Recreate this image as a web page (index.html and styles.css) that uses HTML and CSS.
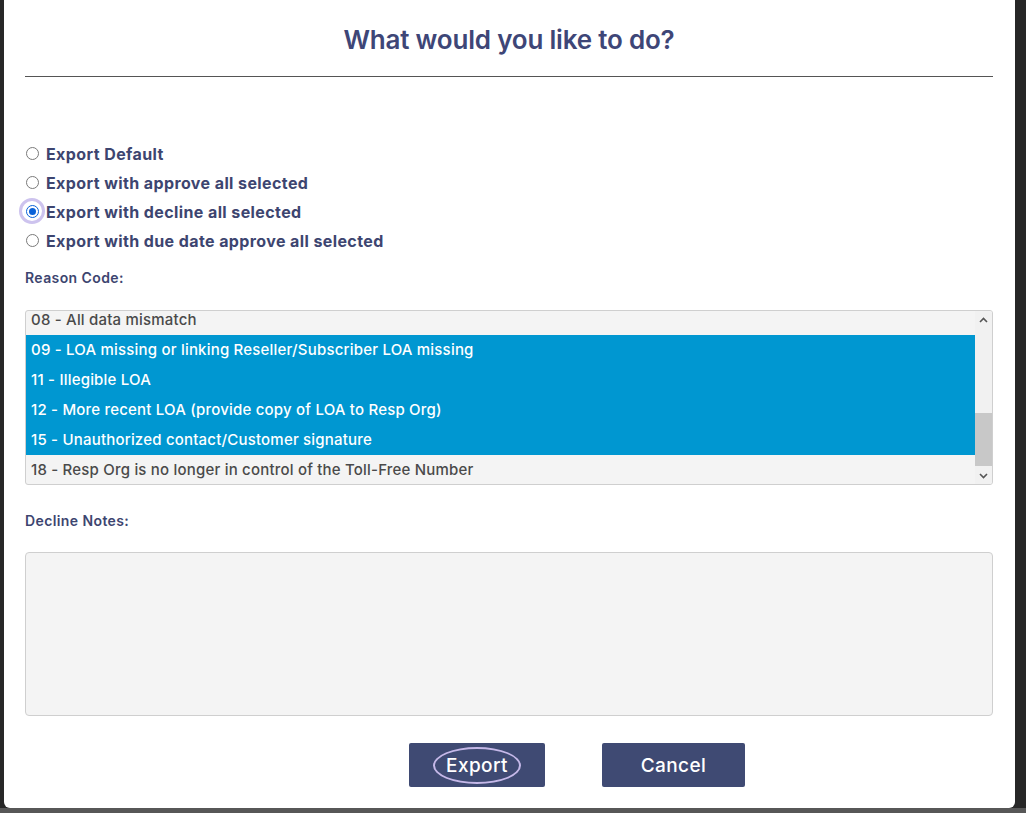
FILE: index.html
```html
<!DOCTYPE html>
<html lang="en">
<head>
<meta charset="utf-8">
<title>Export</title>
<link rel="stylesheet" href="styles.css">
</head>
<body>
<div class="modal">
  <h1 class="title">What would you like to do?</h1>
  <hr class="rule">
  <div class="options">
    <label class="radio-row"><span class="radio"></span><span class="radio-label">Export Default</span></label>
    <label class="radio-row"><span class="radio"></span><span class="radio-label">Export with approve all selected</span></label>
    <label class="radio-row"><span class="radio checked"><span class="dot"></span></span><span class="radio-label">Export with decline all selected</span></label>
    <label class="radio-row"><span class="radio"></span><span class="radio-label">Export with due date approve all selected</span></label>
  </div>
  <div class="field-label reason-label">Reason Code:</div>
  <div class="listbox">
    <div class="list">
      <div class="opt">08 - All data mismatch</div>
      <div class="opt sel">09 - LOA missing or linking Reseller/Subscriber LOA missing</div>
      <div class="opt sel">11 - Illegible LOA</div>
      <div class="opt sel">12 - More recent LOA (provide copy of LOA to Resp Org)</div>
      <div class="opt sel">15 - Unauthorized contact/Customer signature</div>
      <div class="opt">18 - Resp Org is no longer in control of the Toll-Free Number</div>
    </div>
    <div class="scrollbar">
      <div class="arrow">
        <svg width="9" height="6" viewBox="0 0 9 6"><path d="M1 5 L4.5 1.5 L8 5" fill="none" stroke="#555" stroke-width="1.6"/></svg>
      </div>
      <div class="track"><div class="thumb"></div></div>
      <div class="arrow">
        <svg width="9" height="6" viewBox="0 0 9 6"><path d="M1 1 L4.5 4.5 L8 1" fill="none" stroke="#555" stroke-width="1.6"/></svg>
      </div>
    </div>
  </div>
  <div class="field-label notes-label">Decline Notes:</div>
  <div class="notes"></div>
  <div class="actions">
    <button class="btn btn-export"><span class="focus-ring">Export</span></button>
    <button class="btn btn-cancel">Cancel</button>
  </div>
</div>
<div class="backdrop-bottom"></div>
</body>
</html>
```
FILE: styles.css
```css
* { box-sizing: border-box; }
html, body { margin: 0; padding: 0; }
body {
  background: #272727;
  font-family: Inter, "Noto Sans", sans-serif;
  width: 1026px;
  height: 813px;
  overflow: hidden;
}
.modal {
  margin-left: 4px;
  width: 1011px;
  height: 808px;
  background: #fff;
  border-radius: 0 0 6px 6px;
  padding: 0 22px 0 21px;
  display: flex;
  flex-direction: column;
}
.title {
  margin: 24px 0 0;
  height: 32px;
  line-height: 32px;
  text-align: center;
  font-size: 26px;
  font-weight: 600;
  color: #3e4677;
  letter-spacing: -0.2px;
}
.rule {
  margin: 20px 0 0;
  border: 0;
  border-top: 1.5px solid #555;
  height: 0;
}
.options {
  margin-top: 62px;
  display: flex;
  flex-direction: column;
}
.radio-row {
  height: 29px;
  display: flex;
  align-items: center;
  gap: 7px;
  padding-left: 1px;
}
.radio {
  width: 13px;
  height: 13px;
  border: 1.5px solid #7a7a7a;
  border-radius: 50%;
  background: #fff;
  position: relative;
  display: flex;
  align-items: center;
  justify-content: center;
  flex: none;
}
.radio.checked {
  border-color: #0a62d8;
}
.radio.checked::before {
  content: "";
  position: absolute;
  left: -8px;
  top: -8px;
  width: 26px;
  height: 26px;
  border: 3px solid #cdc3ee;
  border-radius: 50%;
  box-sizing: border-box;
}
.dot {
  width: 7px;
  height: 7px;
  border-radius: 50%;
  background: #0a62d8;
}
.radio-label {
  font-size: 16px;
  font-weight: 700;
  color: #3d4570;
  letter-spacing: 0.4px;
}
.field-label {
  font-size: 14px;
  font-weight: 600;
  color: #3d4570;
  height: 18px;
  line-height: 18px;
  letter-spacing: 0.4px;
}
.reason-label { margin-top: 14px; }
.listbox {
  margin-top: 23px;
  height: 175px;
  border: 1px solid #cfcfcf;
  border-radius: 3px;
  background: #f4f4f4;
  display: flex;
  overflow: hidden;
}
.list {
  flex: 1;
  margin-top: -6px;
}
.opt {
  height: 30px;
  line-height: 30px;
  padding-left: 5px;
  font-size: 15px;
  font-weight: 500;
  color: #4a4a4a;
  white-space: nowrap;
  letter-spacing: 0.2px;
}
.opt.sel {
  background: #0097d1;
  color: #fff;
}
.scrollbar {
  width: 17px;
  background: #f1f1f1;
  display: flex;
  flex-direction: column;
}
.arrow {
  height: 17px;
  display: flex;
  align-items: center;
  justify-content: center;
}
.track {
  flex: 1;
  padding-top: 85px;
}
.thumb {
  height: 53px;
  background: #c8c8c8;
}
.notes-label { margin-top: 27px; }
.notes {
  margin-top: 22px;
  height: 164px;
  border: 1px solid #cfcfcf;
  border-radius: 4px;
  background: #f4f4f4;
}
.actions {
  margin-top: 27px;
  display: flex;
  gap: 57px;
  padding-left: 384px;
}
.btn {
  height: 44px;
  border: 0;
  border-radius: 2px;
  background: #3f4a73;
  color: #fff;
  font-family: Inter, "Noto Sans", sans-serif;
  font-size: 19px;
  font-weight: 500;
  letter-spacing: 0.4px;
  display: flex;
  align-items: center;
  justify-content: center;
  padding: 0;
}
.btn-export { width: 136px; }
.btn-cancel { width: 143px; }
.focus-ring {
  display: inline-block;
  width: 88px;
  height: 37px;
  line-height: 33px;
  border: 2px solid #c5b8e8;
  border-radius: 50%;
  text-align: center;
}
.backdrop-bottom {
  height: 5px;
  background: #575757;
}
```
